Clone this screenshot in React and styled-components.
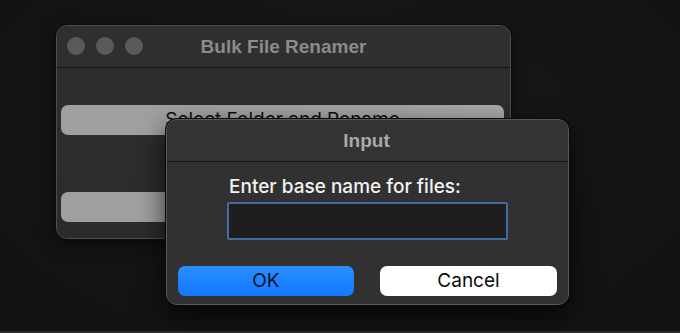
import React from 'react'
import styled, { createGlobalStyle } from 'styled-components'

const GlobalStyle = createGlobalStyle`
    html, body {
        margin: 0;
        padding: 0;
        background: #141414;
    }
    body {
        font-family: Inter, "Liberation Sans", Arial, sans-serif;
        -webkit-font-smoothing: antialiased;
    }
`

const Desktop = styled.div`
    position: relative;
    width: 680px;
    height: 333px;
    overflow: hidden;
    background: radial-gradient(ellipse at 50% 40%, #1b1b1b 0%, #141414 60%, #121212 100%);
    border-bottom: 2px solid #2c2c2c;
    box-sizing: border-box;
`

const Window = styled.div`
    position: absolute;
    left: ${({ x }) => x}px;
    top: ${({ y }) => y}px;
    width: ${({ w }) => w}px;
    height: ${({ h }) => h}px;
    box-sizing: border-box;
    display: flex;
    flex-direction: column;
    background: ${({ bg }) => bg};
    border: 1px solid ${({ edge }) => edge};
    border-radius: 11px;
    box-shadow: ${({ raised }) => raised
        ? '0 0 0 1px #0a0a0a, 0 10px 28px rgba(0,0,0,.75)'
        : '0 0 0 1px #0c0c0c, 0 6px 16px rgba(0,0,0,.5)'};
    overflow: hidden;
`

const TitleBar = styled.div`
    position: relative;
    height: 41px;
    flex: none;
    display: flex;
    align-items: center;
    justify-content: center;
    border-bottom: 1px solid #161616;
    background: ${({ bg }) => bg};
`

const Lights = styled.div`
    position: absolute;
    left: 10px;
    top: 11px;
    display: flex;
    gap: 11px;
`

const Light = styled.span`
    width: 18px;
    height: 18px;
    border-radius: 50%;
    background: #5a5a5a;
`

const Title = styled.div`
    font-family: "Liberation Sans", Arial, sans-serif;
    font-size: ${({ size }) => size}px;
    font-weight: 700;
    color: ${({ color }) => color};
    margin-left: ${({ shift }) => shift || 0}px;
`

const MainBody = styled.div`
    flex: 1;
    display: flex;
    flex-direction: column;
    padding: 37px 6px 16px 4px;
    gap: 57px;
    background: linear-gradient(180deg, #2e2e2e 0%, #2b2b2b 100%);
`

const GrayButton = styled.div`
    height: 30px;
    border-radius: 7px;
    background: linear-gradient(90deg, #9f9f9f 0%, #a4a4a4 70%, #aaaaaa 100%);
    display: flex;
    justify-content: center;
    align-items: center;
    font-size: 19px;
    color: #0d0d0d;
    padding-bottom: 2px;
    box-sizing: border-box;
`

const DialogBody = styled.div`
    flex: 1;
    display: flex;
    flex-direction: column;
    padding: 13px 11px 8px 11px;
    background: #313131;
`

const Field = styled.div`
    display: flex;
    flex-direction: column;
    align-items: flex-start;
    padding-left: 49px;
    gap: 4px;
`

const Label = styled.label`
    font-size: 19px;
    font-weight: 500;
    color: #f2f2f2;
    padding-left: 2px;
    line-height: 23px;
`

const TextInput = styled.input`
    width: 281px;
    height: 38px;
    box-sizing: border-box;
    background: #1e1e1e;
    border: 2px solid #426d9e;
    border-radius: 2px;
    outline: none;
    color: #eee;
    font-size: 16px;
    font-family: inherit;
`

const Actions = styled.div`
    margin-top: auto;
    display: flex;
    justify-content: space-between;
`

const DialogButton = styled.button`
    width: ${({ w }) => w}px;
    height: 30px;
    border: none;
    border-radius: 7px;
    font-family: inherit;
    font-size: 19px;
    padding: 0 0 1px;
    color: ${({ primary }) => primary ? '#061633' : '#0a0a0a'};
    background: ${({ primary }) => primary
        ? 'linear-gradient(180deg, #2b8dff 0%, #1079ff 100%)'
        : '#ffffff'};
`

export default function App() {
    return (
        <>
            <GlobalStyle />
            <Desktop>
                <Window x={56} y={25} w={455} h={214} bg="#2c2c2c" edge="#4e4e4e">
                    <TitleBar bg="#2f2f2f">
                        <Lights>
                            <Light />
                            <Light />
                            <Light />
                        </Lights>
                        <Title size={19} color="#8b8b8b">Bulk File Renamer</Title>
                    </TitleBar>
                    <MainBody>
                        <GrayButton>Select Folder and Rename</GrayButton>
                        {/* label of this one sits under the dialog */}
                        <GrayButton />
                    </MainBody>
                </Window>
                <Window x={166} y={119} w={403} h={186} bg="#313131" edge="#585858" raised>
                    <TitleBar bg="#333333">
                        <Title size={19} color="#a9a9a9" shift={-2}>Input</Title>
                    </TitleBar>
                    <DialogBody>
                        <Field>
                            <Label>Enter base name for files:</Label>
                            <TextInput type="text" />
                        </Field>
                        <Actions>
                            <DialogButton primary w={176}>OK</DialogButton>
                            <DialogButton w={177}>Cancel</DialogButton>
                        </Actions>
                    </DialogBody>
                </Window>
            </Desktop>
        </>
    )
}
